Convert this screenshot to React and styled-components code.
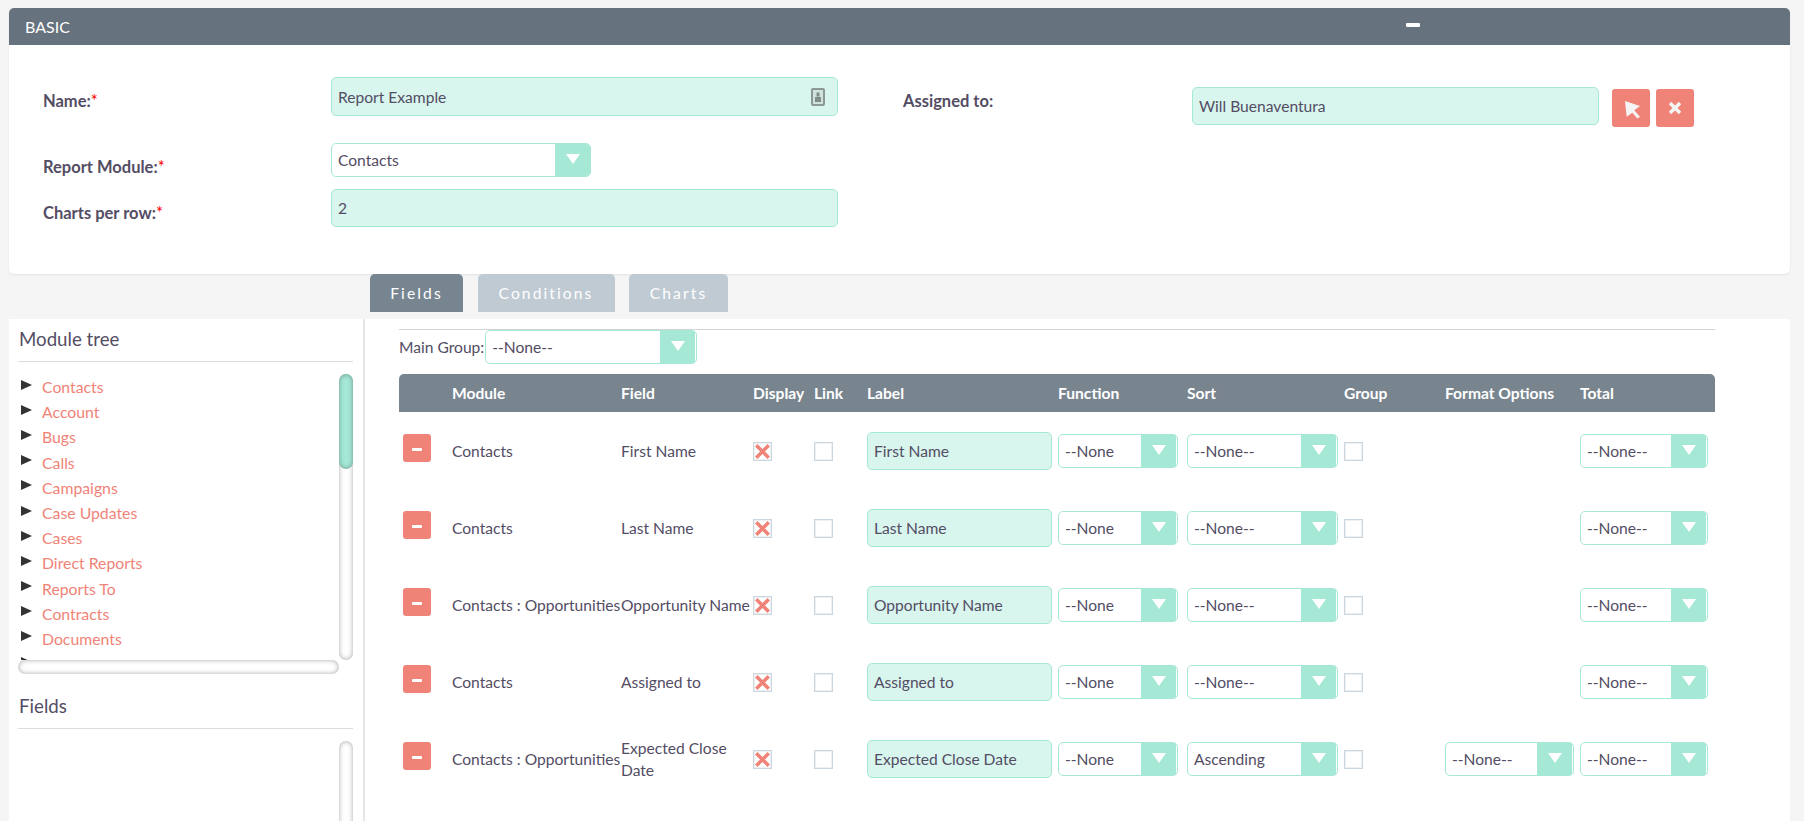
import React from "react";
import styled, { createGlobalStyle } from "styled-components";

const salmon = "#f08377";
const accent = "#a5e8d6";
const inputBg = "#d8f5ee";
const ink = "#534d64";
const columns = "53px 169px 132px 61px 53px 191px 129px 157px 101px 135px 135px";

const GlobalStyle = createGlobalStyle`
  html, body {
    margin: 0;
    height: 100%;
    background: #f5f5f5;
    overflow: hidden;
  }
  body {
    font-family: Lato, "Open Sans", sans-serif;
    font-size: 15.6px;
    color: ${ink};
  }
`;

const Page = styled.div`
  height: 821px;
  box-sizing: border-box;
  padding: 8px 14px 0 9px;
  overflow: hidden;
`;

const Card = styled.section`
  height: 266px;
  background: #fff;
  border-radius: 5px;
  box-shadow: 0 1px 2px rgba(0, 0, 0, 0.08);
`;

const CardHeader = styled.header`
  height: 37px;
  box-sizing: border-box;
  padding-left: 16px;
  display: grid;
  grid-template-columns: 1381px 14px;
  align-items: center;
  background: #66727e;
  border-radius: 5px 5px 0 0;
  color: #fff;
  font-size: 16px;
`;

const Collapse = styled.span`
  width: 14px;
  height: 4px;
  margin-top: -3px;
  background: #fff;
  border-radius: 1px;
`;

const CardBody = styled.div`
  display: grid;
  grid-template-columns: 795px 1fr;
  align-items: start;
  column-gap: 65px;
  padding: 32px 0 0 34px;
`;

const FormRow = styled.div`
  display: grid;
  grid-template-columns: 288px 507px;
  align-items: center;
  justify-items: start;
  margin-top: ${(p) => p.$top || 0}px;
`;

const FieldLabel = styled.label`
  font-size: 16.5px;
  font-weight: 700;
  margin-top: ${(p) => p.$nudge || 0}px;

  em {
    color: #f00;
    font-style: normal;
    font-weight: 400;
  }
`;

const TextField = styled.div`
  width: ${(p) => p.$width || "100%"};
  height: ${(p) => p.$height || 38}px;
  box-sizing: border-box;
  padding: 0 12px 0 6px;
  display: flex;
  align-items: center;
  justify-content: space-between;
  background: ${inputBg};
  border: 1px solid ${accent};
  border-radius: 5px;
  white-space: nowrap;
`;

const AssignedRow = styled.div`
  display: grid;
  grid-template-columns: 289px 407px auto;
  align-items: start;
  padding-top: 10px;
`;

const ActionGroup = styled.div`
  display: flex;
  gap: 6px;
  margin: 2px 0 0 13px;
`;

const IconButton = styled.button`
  width: ${(p) => p.$size || 38}px;
  height: ${(p) => p.$size || 38}px;
  padding: 0;
  display: flex;
  align-items: center;
  justify-content: center;
  background: ${salmon};
  border: 0;
  border-radius: 3px;
`;

const CursorGlyph = styled.svg`
  margin: 4px 0 0 3px;
`;

const SelectBox = styled.div`
  width: ${(p) => p.$width}px;
  height: 34px;
  box-sizing: border-box;
  display: flex;
  align-items: stretch;
  background: #fff;
  border: 1px solid ${accent};
  border-radius: 5px;
  overflow: hidden;
`;

const SelectValue = styled.span`
  flex: 1;
  padding-left: 6px;
  display: flex;
  align-items: center;
  white-space: nowrap;
  overflow: hidden;
`;

const SelectArrow = styled.span`
  width: 35px;
  margin-right: ${(p) => (p.$flush ? 0 : 1)}px;
  padding-top: 10px;
  box-sizing: border-box;
  display: flex;
  justify-content: center;
  background: ${accent};

  &::after {
    content: "";
    width: 0;
    height: 0;
    border-left: 7.5px solid transparent;
    border-right: 7.5px solid transparent;
    border-top: 10px solid #fff;
  }
`;

const TabBar = styled.nav`
  height: 38px;
  padding-left: 361px;
  display: flex;
  gap: 14.5px;
`;

const Tab = styled.a`
  width: ${(p) => p.$width}px;
  display: flex;
  align-items: center;
  justify-content: center;
  background: ${(p) => (p.$active ? "#778591" : "#bfcad3")};
  border-radius: 5px 5px 0 0;
  color: #fff;
  letter-spacing: 2.1px;
`;

const Workspace = styled.main`
  margin-top: 7px;
  height: 502px;
  display: flex;
  gap: 2px;
  background: #e6e6e6;
`;

const Sidebar = styled.aside`
  width: 354px;
  box-sizing: border-box;
  padding: 0 10px 0 9px;
  background: #fff;
  overflow: hidden;
`;

const SideHeading = styled.h3`
  height: 43px;
  box-sizing: border-box;
  margin: ${(p) => p.$top || 0}px 0 12px;
  padding: 0 0 2px 1px;
  display: flex;
  align-items: center;
  border-bottom: 1px solid #ddd;
  font-size: 18.7px;
  font-weight: 400;
`;

const TreeFrame = styled.div`
  display: grid;
  grid-template-columns: 321px 14px;
  grid-template-rows: ${(p) => p.$height}px 14px;
`;

const TreeView = styled.ul`
  margin: 0;
  padding: 0 0 0 3px;
  list-style: none;
  overflow: hidden;
`;

const TreeItem = styled.li`
  height: 25.2px;
  display: flex;
  align-items: center;
  gap: 10px;
  color: ${salmon};
  font-size: 15.8px;

  &::before {
    content: "";
    width: 0;
    height: 0;
    margin-top: -4px;
    border-top: 5.5px solid transparent;
    border-bottom: 5.5px solid transparent;
    border-left: 11px solid #333;
  }
`;

const Track = styled.div`
  background: #fff;
  border-radius: 7px;
  box-shadow: inset 0 0 5px rgba(0, 0, 0, 0.35);
`;

const Thumb = styled.div`
  height: ${(p) => p.$height}px;
  background: ${accent};
  border-radius: 7px;
  box-shadow: inset 0 0 5px rgba(0, 0, 0, 0.35);
`;

const Content = styled.div`
  flex: 1;
  box-sizing: border-box;
  padding: 10px 75px 0 34px;
  background: #fff;
`;

const Rule = styled.hr`
  height: 1px;
  margin: 0;
  border: 0;
  background: #d4d4d4;
`;

const GroupRow = styled.div`
  display: flex;
  align-items: center;
  gap: 1px;
`;

const ColumnHead = styled.div`
  height: 38px;
  margin-top: 10px;
  display: grid;
  grid-template-columns: ${columns};
  align-items: center;
  background: #78858f;
  border-radius: 5px 5px 0 0;
  color: #fff;
  font-weight: 700;
  white-space: nowrap;
`;

const TableRow = styled.div`
  height: 77px;
  display: grid;
  grid-template-columns: ${columns};
  align-items: center;
  line-height: 22px;
`;

const RemoveCell = styled.div`
  padding: 0 0 6px 4px;
`;

const MinusBar = styled.span`
  width: 10px;
  height: 3px;
  margin-top: 3px;
  background: #fff;
  border-radius: 1px;
`;

const FieldName = styled.span`
  padding-right: 2px;
`;

const CheckBox = styled.span`
  width: 19px;
  height: 19px;
  box-sizing: border-box;
  margin-top: 2px;
  display: flex;
  align-items: center;
  justify-content: center;
  background: #fff;
  border: 1px solid #cbd6df;
  box-shadow: inset 0 0 0 1px #eef1f4;
`;

const rows = [
  { module: "Contacts", field: "First Name" },
  { module: "Contacts", field: "Last Name" },
  { module: "Contacts : Opportunities", field: "Opportunity Name" },
  { module: "Contacts", field: "Assigned to" },
  { module: "Contacts : Opportunities", field: "Expected Close Date", sort: "Ascending", format: true },
];

const treeItems = [
  "Contacts",
  "Account",
  "Bugs",
  "Calls",
  "Campaigns",
  "Case Updates",
  "Cases",
  "Direct Reports",
  "Reports To",
  "Contracts",
  "Documents",
];

const headings = [
  "",
  "Module",
  "Field",
  "Display",
  "Link",
  "Label",
  "Function",
  "Sort",
  "Group",
  "Format Options",
  "Total",
];

function Select({ width, value, flush }) {
  return (
    <SelectBox $width={width}>
      <SelectValue>{value}</SelectValue>
      <SelectArrow $flush={flush} />
    </SelectBox>
  );
}

function ContactIcon() {
  return (
    <svg width="14" height="18" viewBox="0 0 14 18">
      <rect x="1" y="1" width="12" height="16" rx="1" fill="#cfe3dd" stroke="#8b9895" strokeWidth="2" />
      <rect x="4" y="9" width="6" height="5" fill="#7f8c89" />
      <rect x="5.5" y="4.5" width="3" height="4" fill="#7f8c89" />
    </svg>
  );
}

function CursorIcon() {
  return (
    <CursorGlyph width="16" height="18" viewBox="0 0 16 18">
      <polygon points="0,0 15,5 9.3,9.3 15,15.7 12.3,17.5 7.3,11.7 1.7,15.7" fill="#f5f5f5" />
    </CursorGlyph>
  );
}

function CrossIcon({ size, color, weight }) {
  return (
    <svg width={size} height={size} viewBox="0 0 12 12">
      <path d="M1 1 L11 11 M11 1 L1 11" stroke={color} strokeWidth={weight} fill="none" />
    </svg>
  );
}

export default function App() {
  return (
    <Page>
      <GlobalStyle />
      <Card>
        <CardHeader>
          <span>BASIC</span>
          <Collapse />
        </CardHeader>
        <CardBody>
          <div>
            <FormRow>
              <FieldLabel $nudge={9}>Name:<em>*</em></FieldLabel>
              <TextField $height={39}>
                Report Example
                <ContactIcon />
              </TextField>
            </FormRow>
            <FormRow $top={27}>
              <FieldLabel $nudge={14}>Report Module:<em>*</em></FieldLabel>
              <Select width={260} value="Contacts" flush />
            </FormRow>
            <FormRow $top={12}>
              <FieldLabel $nudge={10}>Charts per row:<em>*</em></FieldLabel>
              <TextField>2</TextField>
            </FormRow>
          </div>
          <AssignedRow>
            <FieldLabel $nudge={4}>Assigned to:</FieldLabel>
            <TextField>Will Buenaventura</TextField>
            <ActionGroup>
              <IconButton><CursorIcon /></IconButton>
              <IconButton><CrossIcon size={12} color="#f5f5f5" weight={3.4} /></IconButton>
            </ActionGroup>
          </AssignedRow>
        </CardBody>
      </Card>

      <TabBar>
        <Tab $width={93} $active>Fields</Tab>
        <Tab $width={137}>Conditions</Tab>
        <Tab $width={99}>Charts</Tab>
      </TabBar>

      <Workspace>
        <Sidebar>
          <SideHeading>Module tree</SideHeading>
          <TreeFrame $height={286}>
            <TreeView>
              {treeItems.map((item) => (
                <TreeItem key={item}>{item}</TreeItem>
              ))}
              <TreeItem />
            </TreeView>
            <Track><Thumb $height={95} /></Track>
            <Track />
          </TreeFrame>
          <SideHeading $top={12}>Fields</SideHeading>
          <TreeFrame $height={286}>
            <div />
            <Track />
          </TreeFrame>
        </Sidebar>

        <Content>
          <Rule />
          <GroupRow>
            <span>Main Group:</span>
            <Select width={212} value="--None--" />
          </GroupRow>
          <ColumnHead>
            {headings.map((heading) => (
              <span key={heading}>{heading}</span>
            ))}
          </ColumnHead>
          {rows.map((row) => (
            <TableRow key={row.field}>
              <RemoveCell>
                <IconButton $size={28}><MinusBar /></IconButton>
              </RemoveCell>
              <span>{row.module}</span>
              <FieldName>{row.field}</FieldName>
              <CheckBox><CrossIcon size={15} color={salmon} weight={2.8} /></CheckBox>
              <CheckBox />
              <TextField $width="185px">{row.field}</TextField>
              <Select width={120} value="--None" />
              <Select width={151} value={row.sort || "--None--"} />
              <CheckBox />
              {row.format ? <Select width={129} value="--None--" /> : <span />}
              <Select width={128} value="--None--" />
            </TableRow>
          ))}
        </Content>
      </Workspace>
    </Page>
  );
}
